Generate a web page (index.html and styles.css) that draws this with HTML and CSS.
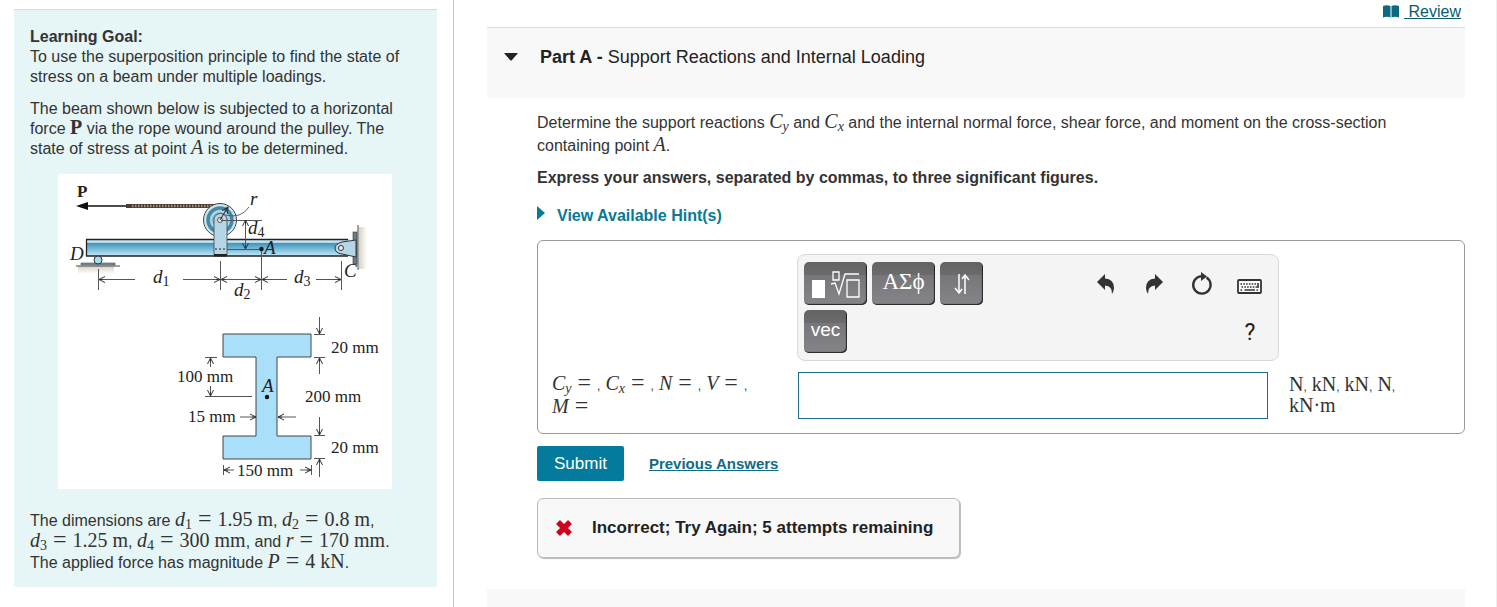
FILE: index.html
```html
<!DOCTYPE html>
<html lang="en">
    <head>
        <meta charset="utf-8">
        <title>Support Reactions and Internal Loading</title>
        <link rel="stylesheet" href="styles.css">
    </head>
    <body>
        <div class="container">
            <aside class="side">
                <div class="goal">
                    <p><b>Learning Goal:</b><br>To use the superposition principle to find the state of stress on a beam under multiple loadings.</p>
                    <p>The beam shown below is subjected to a horizontal force <b class="math">P</b> via the rope wound around the pulley. The state of stress at point <i class="math">A</i> is to be determined.</p>
                    <svg class="figure" viewBox="0 0 334 315" role="img" aria-label="Beam with pulley and its cross-section">
                        <defs>
                            <linearGradient id="beam" x1="0" y1="0" x2="0" y2="1">
                                <stop offset="0" stop-color="#cfe9f6"/>
                                <stop offset="0.2" stop-color="#c0e2f2"/>
                                <stop offset="0.25" stop-color="#3f94ba"/>
                                <stop offset="0.8" stop-color="#9fd3ea"/>
                                <stop offset="1" stop-color="#c6e6f5"/>
                            </linearGradient>
                            <linearGradient id="ground" x1="0" y1="0" x2="0" y2="1">
                                <stop offset="0" stop-color="#d8d3c4"/>
                                <stop offset="1" stop-color="#ffffff"/>
                            </linearGradient>
                            <linearGradient id="wall">
                                <stop offset="0" stop-color="#d8d3c4"/>
                                <stop offset="1" stop-color="#ffffff"/>
                            </linearGradient>
                            <marker id="arrow" viewBox="0 0 8 8" refX="7" refY="4" markerWidth="8" markerHeight="8" markerUnits="userSpaceOnUse" orient="auto-start-reverse">
                                <path d="M1 1 L7 4 L1 7 M7 4 L3 4" fill="none" stroke="#333" stroke-width="1"/>
                            </marker>
                        </defs>
                        <!-- supports -->
                        <rect x="20" y="92" width="36" height="8" fill="url(#ground)"/>
                        <rect x="301" y="53" width="8" height="42" fill="url(#wall)"/>
                        <rect x="23" y="89" width="34" height="2" fill="#7f9aa5" stroke="#333" stroke-width="0.5"/>
                        <path d="M18 92 H62 M300 51 V96" stroke="#444" fill="none"/>
                        <!-- beam -->
                        <rect x="28" y="65" width="264" height="17" fill="url(#beam)"/>
                        <path d="M28 65.5 H290 M28 82 H290 M28.5 65 V82" stroke="#222" stroke-width="1.3"/>
                        <circle cx="40" cy="86" r="4" fill="#a9dcf2" stroke="#333"/>
                        <rect x="295" y="58" width="4" height="32" fill="#6b7e87" stroke="#333" stroke-width="0.6"/>
                        <path d="M298 66 L284 68 Q277 70 277 74 Q277 79 284 80 L298 83 Z" fill="#b5d6e6" stroke="#333"/>
                        <circle cx="283" cy="74" r="2.5" fill="#eee" stroke="#333"/>
                        <!-- rope -->
                        <path d="M28 32 H70" stroke="#111" stroke-width="1.5"/>
                        <path d="M18 32 L30 28 V36 Z" fill="#111"/>
                        <path d="M68 32 H160" stroke="#4b3b33" stroke-width="4"/>
                        <path d="M74 32 H160" stroke="#a3917f" stroke-width="2.5" stroke-dasharray="1.5 1.5"/>
                        <!-- pulley -->
                        <circle cx="162" cy="46" r="16.5" fill="#cfe6f1" stroke="#444"/>
                        <circle cx="162" cy="46" r="12" fill="#a5d5ea" stroke="#4688a8" stroke-width="3.5"/>
                        <circle cx="162" cy="46" r="7" fill="#d4e8f1" stroke="#555" stroke-width="0.7"/>
                        <path d="M156 81 V46 A6.5 6.5 0 0 1 169 46 V81 Z" fill="#b5d6e6" stroke="#444" stroke-width="0.8"/>
                        <rect x="156" y="80" width="13" height="2.5" fill="#222"/>
                        <circle cx="162" cy="46" r="2.5" fill="#eee" stroke="#333" stroke-width="0.8"/>
                        <path d="M157 75 H168" stroke="#222" stroke-dasharray="2 2"/>
                        <path d="M162 46 L170 33" stroke="#222" marker-end="url(#arrow)"/>
                        <path d="M167 41 Q183 45 191 33" stroke="#555" fill="none" stroke-width="0.9"/>
                        <!-- dimensions of the beam -->
                        <g class="dims">
                            <path d="M163 46.5 H204 M169 75.5 H203 M40.5 95 V116 M162.5 87 V116 M203.5 76 V116 M283.5 87 V116"/>
                            <path d="M187.5 46 V75" marker-start="url(#arrow)" marker-end="url(#arrow)"/>
                            <path d="M41 105.5 H77" marker-start="url(#arrow)"/>
                            <path d="M125 105.5 H162" marker-end="url(#arrow)"/>
                            <path d="M163 105.5 H203" marker-start="url(#arrow)" marker-end="url(#arrow)"/>
                            <path d="M204 105.5 H229" marker-start="url(#arrow)"/>
                            <path d="M258 105.5 H283" marker-end="url(#arrow)"/>
                        </g>
                        <circle cx="203.5" cy="75" r="2.2" fill="#111"/>
                        <g class="labels">
                            <text x="19" y="23" class="bold">P</text>
                            <text x="12" y="86" class="it">D</text>
                            <text x="192" y="31" class="it">r</text>
                            <text x="190" y="60" class="it">d<tspan class="sub" dy="3">4</tspan></text>
                            <text x="206" y="80" class="it">A</text>
                            <text x="286" y="103" class="it">C</text>
                            <text x="95" y="109" class="it">d<tspan class="sub" dy="3">1</tspan></text>
                            <text x="176" y="122" class="it">d<tspan class="sub" dy="3">2</tspan></text>
                            <text x="236" y="109" class="it">d<tspan class="sub" dy="3">3</tspan></text>
                        </g>
                        <!-- cross-section -->
                        <path d="M165 160 H253 V183 H219 V262 H253 V285 H165 V262 H198 V183 H165 Z" fill="#a9dff8" stroke="#444"/>
                        <g class="dims">
                            <path d="M256 160.500 H267 M256 183.500 H267 M256 261.500 H267 M256 284.500 H267 M147 183.500 H159 M147 222.500 H194 M165.500 291 V301 M253.500 291 V301"/>
                            <path d="M261.500 143 V160" marker-end="url(#arrow)"/>
                            <path d="M261.500 200 V184" marker-end="url(#arrow)"/>
                            <path d="M261.500 243 V261" marker-end="url(#arrow)"/>
                            <path d="M261.500 303 V285" marker-end="url(#arrow)"/>
                            <path d="M152.500 193 V184" marker-end="url(#arrow)"/>
                            <path d="M152.500 212 V222" marker-end="url(#arrow)"/>
                            <path d="M182 243 H198" marker-end="url(#arrow)"/>
                            <path d="M238 243 H220" marker-end="url(#arrow)"/>
                            <path d="M176 296 H166" marker-end="url(#arrow)"/>
                            <path d="M242 296 H253" marker-end="url(#arrow)"/>
                        </g>
                        <circle cx="209" cy="223" r="2.2" fill="#111"/>
                        <g class="labels">
                            <text x="204" y="218" class="it">A</text>
                            <text x="273" y="179">20 mm</text>
                            <text x="247" y="228">200 mm</text>
                            <text x="273" y="279">20 mm</text>
                            <text x="119" y="208">100 mm</text>
                            <text x="130" y="248">15 mm</text>
                            <text x="179" y="302">150 mm</text>
                        </g>
                    </svg>
                    <p>The dimensions are <span class="math"><i>d</i><sub>1</sub> <span class="eq">=</span> 1.95 m</span>, <span class="math"><i>d</i><sub>2</sub> <span class="eq">=</span> 0.8 m</span>,<br>
                    <span class="math"><i>d</i><sub>3</sub> <span class="eq">=</span> 1.25 m</span>, <span class="math"><i>d</i><sub>4</sub> <span class="eq">=</span> 300 mm</span>, and <span class="math"><i>r</i> <span class="eq">=</span> 170 mm</span>.<br>
                    The applied force has magnitude <span class="math"><i>P</i> <span class="eq">=</span> 4 kN</span>.</p>
                </div>
            </aside>
            <main class="main">
                <div class="top">
                    <svg width="16" height="13" viewBox="0 0 16 13"><path d="M0 1 Q4 -0.500 7.500 1 V12.500 Q4 11 0 12.500 Z M8.500 1 Q12 -0.500 16 1 V12.500 Q12 11 8.500 12.500 Z" fill="#0b6a80"/></svg>
                    <a href="#">&nbsp;Review</a>
                </div>
                <header class="part">
                    <svg width="14" height="8" viewBox="0 0 14 8"><path d="M0 0 H14 L8 7 Q7 8 6 7 Z" fill="#222"/></svg>
                    <h1>Part A - <span>Support Reactions and Internal Loading</span></h1>
                </header>
                <form class="question">
                    <p>Determine the support reactions <span class="math"><i>C<sub>y</sub></i></span> and <span class="math"><i>C<sub>x</sub></i></span> and the internal normal force, shear force, and moment on the cross-section containing point <i class="math">A</i>.</p>
                    <p><b>Express your answers, separated by commas, to three significant figures.</b></p>
                    <a class="hint" href="#"><svg width="8" height="14" viewBox="0 0 8 14"><path d="M0 0 L8 7 L0 14 Z" fill="#087a96"/></svg>View Available Hint(s)</a>
                    <div class="answer">
                        <div class="toolbar">
                            <div class="keys">
                                <button type="button" class="key wide" aria-label="Templates"><svg width="49" height="28" viewBox="0 0 49 28"><path d="M1 10 H14 V28 H1 Z" fill="#fff"/><path d="M22 2 H28 V10 H22 Z M36 10 H48 V27 H36 Z M20 14 L24 13 L28 24 L34 4 H48" fill="none" stroke="#fff" stroke-width="1.300"/></svg></button>
                                <button type="button" class="key wide greek">ΑΣϕ</button>
                                <button type="button" class="key" aria-label="Arrows"><svg width="18" height="20" viewBox="0 0 18 20"><path d="M6 0 V19 M2 14 L6 19 L9 15 M12 20 V1 M9 5 L12 1 L16 6" fill="none" stroke="#fff" stroke-width="1.500"/></svg></button>
                                <button type="button" class="key vec">vec</button>
                            </div>
                            <div class="tools">
                                <button type="button" aria-label="Undo"><svg width="18" height="20" viewBox="0 0 18 20"><path d="M0 8 L8 0 V4.500 Q17 5 17 14 Q17 17 15 20 Q15.500 12 8 11.500 V16 Z"/></svg></button>
                                <button type="button" aria-label="Redo"><svg width="18" height="20" viewBox="0 0 18 20"><path d="M18 8 L10 0 V4.500 Q1 5 1 14 Q1 17 3 20 Q2.500 12 10 11.500 V16 Z"/></svg></button>
                                <button type="button" aria-label="Reset"><svg width="22" height="24" viewBox="0 0 22 24"><path d="M15.500 5.500 A8.700 8.700 0 1 1 6 5.700 Q8 4.300 11 4.300" fill="none" stroke="#333" stroke-width="2.400"/><path d="M10 0 L16 4.500 L10 9 Z"/></svg></button>
                                <button type="button" aria-label="Keyboard shortcuts"><svg class="board" width="26" height="16" viewBox="0 0 26 16"><rect x="1" y="1" width="23" height="13" rx="1" fill="#fff" stroke="#333" stroke-width="1.800"/><path d="M3.500 5 H20 M4.500 8 H20 M3.500 11 H6 M19.500 11 H22" stroke="#333" stroke-width="1.600" stroke-dasharray="1.600 1.200"/><path d="M7.500 11 H18 M21 4 V9" stroke="#333" stroke-width="1.600"/></svg></button>
                                <button type="button" class="help" aria-label="Help">?</button>
                            </div>
                        </div>
                        <label class="math" for="reply"><i>C<sub>y</sub></i> <span class="eq">=</span> <small>,</small> <i>C<sub>x</sub></i> <span class="eq">=</span> <small>,</small> <i>N</i> <span class="eq">=</span> <small>,</small> <i>V</i> <span class="eq">=</span> <small>,</small><br><i>M</i> <span class="eq">=</span></label>
                        <input type="text" id="reply">
                        <span class="math units">N<small>,</small> kN<small>,</small> kN<small>,</small> N<small>,</small><br>kN·m</span>
                    </div>
                    <div class="actions">
                        <button type="submit" class="submit">Submit</button>
                        <a href="#">Previous Answers</a>
                    </div>
                    <div class="feedback">
                        <svg width="18" height="18" viewBox="0 0 18 18"><path d="M3 3 L15 15 M15 3 L3 15" stroke="#d0021b" stroke-width="5.500"/></svg>
                        <span>Incorrect; Try Again; 5 attempts remaining</span>
                    </div>
                </form>
                <div class="next"></div>
            </main>
        </div>
    </body>
</html>
```
FILE: styles.css
```css
*{
    margin: 0;
    padding: 0;
    box-sizing: border-box;
}
body{
    font-family: "Liberation Sans", Arial, sans-serif;
    font-size: 16px;
    line-height: 20px;
    color: #333;
    background-color: white;
}
a{
    color: #0b5a70;
}
.container{
    display: flex;
    height: 100vh;
    overflow: hidden;
}
.side{
    flex: 0 0 454px;
    padding: 9px 16px 0 14px;
    border-right: 1px solid #c4c8cc;
}
.goal{
    padding: 17px 16px 14px;
    background-color: #e6f5f6;
    border-top: 1px solid #d0dcdd;
}
.goal p{
    margin-bottom: 12px;
}
.goal p:last-child{
    margin-bottom: 0;
    line-height: 21px;
}
.math{
    font-family: "Liberation Serif", "Times New Roman", serif;
    font-size: 20px;
    line-height: 0;
}
.math sub{
    font-size: 14px;
    line-height: 0;
    vertical-align: -3px;
}
.math small{
    font-family: "Liberation Sans", Arial, sans-serif;
    font-size: 12px;
    line-height: 0;
}
.eq{
    font-size: 24px;
    line-height: 0;
    margin: 0 1px;
}
.figure{
    display: block;
    width: 334px;
    margin: 15px auto 21px 28px;
    background-color: white;
}
.dims path{
    fill: none;
    stroke: #555;
    stroke-width: 1;
}
.labels text{
    font-family: "Liberation Serif", "Times New Roman", serif;
    font-size: 17px;
    fill: #222;
}
.labels .it{
    font-size: 19px;
    font-style: italic;
}
.labels .bold{
    font-weight: bold;
}
.labels .sub{
    font-size: 14px;
    font-style: normal;
}
.main{
    flex: 1;
    min-width: 0;
    padding: 0 31px 0 33px;
    border-right: 1px solid #eee;
}
.top{
    display: flex;
    justify-content: flex-end;
    align-items: center;
    gap: 5px;
    height: 27px;
    padding: 0 4px 4px 0;
}
.part{
    display: flex;
    align-items: flex-start;
    gap: 22px;
    height: 71px;
    padding: 19px 17px;
    background-color: #f8f8f8;
    border-top: 1px solid #ddd;
}
.part svg{
    margin-top: 6px;
}
.part h1{
    font-size: 18px;
    color: #222;
}
.part h1 span{
    font-weight: normal;
}
.question{
    padding: 13px 0 31px 50px;
}
.question p{
    line-height: 23px;
    margin-bottom: 9px;
    padding-right: 24px;
}
.hint{
    display: flex;
    gap: 12px;
    margin: 17px 0 14px;
    font-weight: bold;
    text-decoration: none;
    color: #087a96;
}
.answer{
    display: grid;
    grid-template-columns: 245px minmax(0, 482px) 1fr;
    row-gap: 11px;
    padding: 13px 14px 14px;
    border: 1px solid #999;
    border-radius: 6px;
}
.toolbar{
    grid-column: 2;
    display: flex;
    justify-content: space-between;
    padding: 7px 4px 7px 6px;
    border: 1px solid #d8d8d8;
    border-radius: 8px;
    background-color: #f4f4f4;
}
.keys{
    display: flex;
    flex-wrap: wrap;
    align-content: flex-start;
    gap: 5px;
    width: 190px;
}
.key{
    display: flex;
    justify-content: center;
    align-items: center;
    width: 43px;
    height: 43px;
    border: none;
    border-radius: 5px;
    color: white;
    background: linear-gradient(#636363, #6b6b6b 13px, #77777b 13px, #858589);
    box-shadow: inset -1px -1px 1px #222;
}
.wide{
    width: 63px;
}
.greek{
    padding-bottom: 4px;
    font-family: "Liberation Serif", "Times New Roman", serif;
    font-size: 23px;
}
.vec{
    padding-bottom: 4px;
    font-family: "Liberation Sans", Arial, sans-serif;
    font-size: 19px;
}
.tools{
    display: flex;
    flex-wrap: wrap;
    justify-content: flex-end;
    width: 192px;
    margin: -2px 0 -3px;
}
.tools button{
    display: flex;
    justify-content: center;
    align-items: center;
    width: 48px;
    height: 48px;
    border: none;
    background: none;
    fill: #333;
}
.tools .board{
    margin-top: 6px;
}
.tools .help{
    font-family: Roboto, sans-serif;
    font-size: 23px;
    color: #222;
}
.answer label{
    grid-column: 1;
    line-height: 23px;
}
.answer input{
    width: 470px;
    max-width: 100%;
    height: 47px;
    margin-left: 1px;
    padding: 0 8px;
    border: 1px solid #1f6b85;
    font-size: 16px;
}
.units{
    padding: 2px 0 0 10px;
    line-height: 21px;
}
.actions{
    display: flex;
    align-items: center;
    gap: 25px;
    margin: 12px 0 17px;
}
.actions a{
    font-size: 15px;
    font-weight: bold;
    color: #106b84;
}
.submit{
    height: 35px;
    padding: 0 17px;
    border: none;
    border-radius: 2px;
    font-family: "Liberation Sans", Arial, sans-serif;
    font-size: 17px;
    color: white;
    background-color: #047a9c;
}
.feedback{
    display: inline-flex;
    align-items: center;
    gap: 19px;
    height: 60px;
    padding: 0 26px 0 17px;
    border: 1px solid #bbb;
    border-radius: 6px;
    box-shadow: 1px 1px 1px #bbb;
    background-color: #f8f8f8;
    font-size: 17px;
    font-weight: bold;
    color: #222;
}
.next{
    height: 71px;
    background-color: #f8f8f8;
}
```
